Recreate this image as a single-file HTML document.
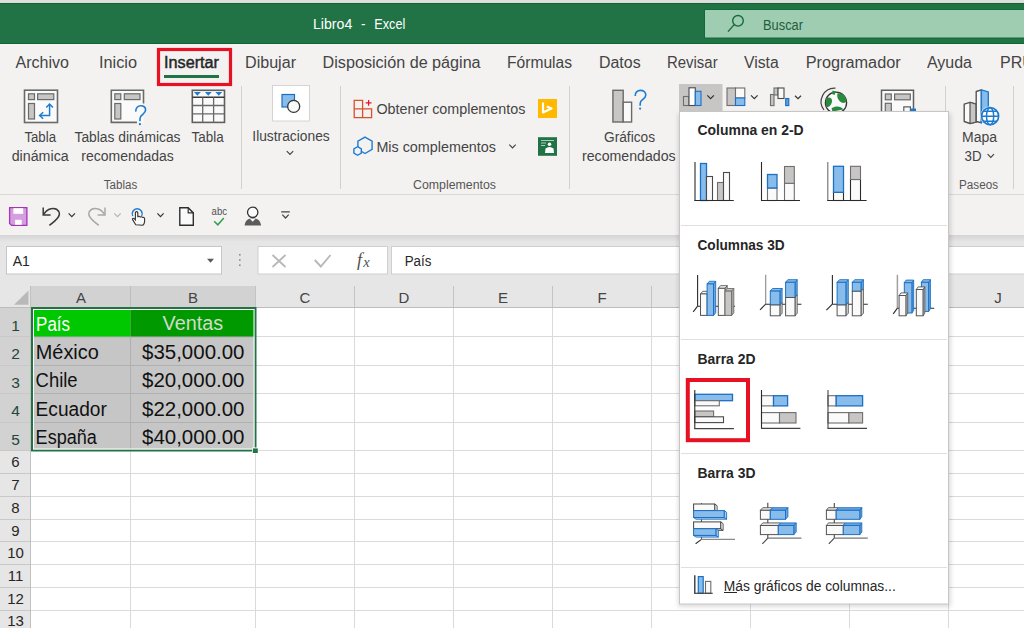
<!DOCTYPE html>
<html><head><meta charset="utf-8"><style>
html,body{margin:0;padding:0;width:1024px;height:628px;overflow:hidden;background:#fff}
svg{display:block}
text{font-family:"Liberation Sans",sans-serif;white-space:pre}
</style></head><body>
<svg width="1024" height="628" viewBox="0 0 1024 628">
<rect x="0" y="0" width="1024" height="628" fill="#ffffff" />
<rect x="0" y="0" width="1024" height="3" fill="#dedcdc" />
<rect x="0" y="3" width="1024" height="41" fill="#217346" />
<rect x="0" y="3" width="1024" height="1" fill="#0b6632" />
<rect x="0" y="43" width="1024" height="1" fill="#0b6632" />
<rect x="704.5" y="9.5" width="330" height="28.5" fill="#9fcdb2" stroke="#106b37" stroke-width="1"/>
<circle cx="738" cy="20.8" r="5.3" fill="none" stroke="#176a39" stroke-width="1.4"/>
<line x1="734.2" y1="24.6" x2="728" y2="31.6" stroke="#176a39" stroke-width="1.4"/>
<text x="763" y="29.6" font-size="14" fill="#1f5e3b" textLength="40" lengthAdjust="spacingAndGlyphs" >Buscar</text>
<text x="313" y="28.8" font-size="15" fill="#ffffff" textLength="39.3" lengthAdjust="spacingAndGlyphs" >Libro4</text>
<text x="361" y="28.8" font-size="15" fill="#ffffff" textLength="4.5" lengthAdjust="spacingAndGlyphs" >-</text>
<text x="374.3" y="28.8" font-size="15" fill="#ffffff" textLength="31" lengthAdjust="spacingAndGlyphs" >Excel</text>
<rect x="0" y="44" width="1024" height="150" fill="#f3f2f1" />
<rect x="0" y="194" width="1024" height="1" fill="#dad8d6" />
<text x="15.6" y="68" font-size="16" fill="#444444" textLength="53.4" lengthAdjust="spacingAndGlyphs" >Archivo</text>
<text x="99" y="68" font-size="16" fill="#444444" textLength="38" lengthAdjust="spacingAndGlyphs" >Inicio</text>
<text x="245" y="68" font-size="16" fill="#444444" textLength="51" lengthAdjust="spacingAndGlyphs" >Dibujar</text>
<text x="322.6" y="68" font-size="16" fill="#444444" textLength="158" lengthAdjust="spacingAndGlyphs" >Disposición de página</text>
<text x="507" y="68" font-size="16" fill="#444444" textLength="65" lengthAdjust="spacingAndGlyphs" >Fórmulas</text>
<text x="599" y="68" font-size="16" fill="#444444" textLength="41.6" lengthAdjust="spacingAndGlyphs" >Datos</text>
<text x="667" y="68" font-size="16" fill="#444444" textLength="50.6" lengthAdjust="spacingAndGlyphs" >Revisar</text>
<text x="744" y="68" font-size="16" fill="#444444" textLength="34.7" lengthAdjust="spacingAndGlyphs" >Vista</text>
<text x="805.7" y="68" font-size="16" fill="#444444" textLength="95" lengthAdjust="spacingAndGlyphs" >Programador</text>
<text x="927" y="68" font-size="16" fill="#444444" textLength="45" lengthAdjust="spacingAndGlyphs" >Ayuda</text>
<text x="1000" y="68" font-size="16" fill="#444444" >PRU</text>
<text x="164" y="68" font-size="16" fill="#262626" textLength="55" lengthAdjust="spacingAndGlyphs" stroke="#262626" stroke-width="0.45">Insertar</text>
<rect x="164" y="75" width="55" height="3" fill="#217346" />
<rect x="158.5" y="49.5" width="72" height="35" fill="none" stroke="#e81123" stroke-width="3.2"/>
<rect x="241" y="86" width="1" height="103" fill="#d2d0ce" />
<rect x="340" y="86" width="1" height="103" fill="#d2d0ce" />
<rect x="569" y="86" width="1" height="103" fill="#d2d0ce" />
<rect x="945" y="86" width="1" height="103" fill="#d2d0ce" />
<rect x="1013" y="86" width="1" height="103" fill="#d2d0ce" />
<text x="24.4" y="142.3" font-size="14" fill="#444444" textLength="31.6" lengthAdjust="spacingAndGlyphs" >Tabla</text>
<text x="11.7" y="161.3" font-size="14" fill="#444444" textLength="57" lengthAdjust="spacingAndGlyphs" >dinámica</text>
<text x="74.5" y="142.3" font-size="14" fill="#444444" textLength="106" lengthAdjust="spacingAndGlyphs" >Tablas dinámicas</text>
<text x="81.3" y="161.3" font-size="14" fill="#444444" textLength="92.5" lengthAdjust="spacingAndGlyphs" >recomendadas</text>
<text x="191.6" y="142.3" font-size="14" fill="#444444" textLength="32" lengthAdjust="spacingAndGlyphs" >Tabla</text>
<text x="103.8" y="189.2" font-size="12" fill="#555555" textLength="33.4" lengthAdjust="spacingAndGlyphs" >Tablas</text>
<text x="252.3" y="140.5" font-size="14" fill="#444444" textLength="77.4" lengthAdjust="spacingAndGlyphs" >Ilustraciones</text>
<text x="376.4" y="114" font-size="14" fill="#444444" textLength="149" lengthAdjust="spacingAndGlyphs" >Obtener complementos</text>
<text x="376.4" y="152" font-size="14" fill="#444444" textLength="119.6" lengthAdjust="spacingAndGlyphs" >Mis complementos</text>
<text x="413" y="189" font-size="12" fill="#555555" textLength="83" lengthAdjust="spacingAndGlyphs" >Complementos</text>
<text x="604" y="141.8" font-size="14" fill="#444444" textLength="51" lengthAdjust="spacingAndGlyphs" >Gráficos</text>
<text x="582" y="160.9" font-size="14" fill="#444444" textLength="93.6" lengthAdjust="spacingAndGlyphs" >recomendados</text>
<text x="962" y="142.4" font-size="14" fill="#444444" textLength="35" lengthAdjust="spacingAndGlyphs" >Mapa</text>
<text x="964.6" y="161" font-size="14" fill="#444444" textLength="17" lengthAdjust="spacingAndGlyphs" >3D</text>
<text x="959" y="189" font-size="12" fill="#555555" textLength="39" lengthAdjust="spacingAndGlyphs" >Paseos</text>
<rect x="0" y="195" width="1024" height="40" fill="#f3f2f1" />
<rect x="0" y="235" width="1024" height="73" fill="#e6e6e6" />
<defs><linearGradient id="qsh" x1="0" y1="0" x2="0" y2="1"><stop offset="0" stop-color="#d4d4d4"/><stop offset="1" stop-color="#e6e6e6"/></linearGradient></defs>
<rect x="0" y="235" width="1024" height="7" fill="url(#qsh)" />
<rect x="6.5" y="246.5" width="215" height="27.5" fill="#ffffff" stroke="#c6c6c6" stroke-width="1"/>
<text x="12.7" y="265.9" font-size="14" fill="#262626" textLength="17.1" lengthAdjust="spacingAndGlyphs" >A1</text>
<polygon points="207,258.8 214,258.8 210.5,262.8" fill="#5a5a5a"/>
<rect x="239" y="254.0" width="1.6" height="1.6" fill="#8e8e8e" />
<rect x="239" y="259.2" width="1.6" height="1.6" fill="#8e8e8e" />
<rect x="239" y="264.4" width="1.6" height="1.6" fill="#8e8e8e" />
<rect x="258" y="246.5" width="129.5" height="27.5" fill="#ffffff" stroke="#cfcfcf" stroke-width="1"/>
<path d="M272.5 255 L285.5 267 M285.5 255 L272.5 267" stroke="#b8b8b8" stroke-width="1.8" fill="none"/>
<path d="M314.8 260 L320.8 266.5 L330.5 255" stroke="#b8b8b8" stroke-width="1.9" fill="none"/>
<text x="357" y="265.5" font-size="18" font-style="italic" fill="#505050" style="font-family:'Liberation Serif',serif">f</text>
<text x="363.3" y="266.5" font-size="14.5" font-style="italic" fill="#505050" style="font-family:'Liberation Serif',serif">x</text>
<rect x="391.5" y="246.5" width="640" height="27.5" fill="#ffffff" stroke="#cfcfcf" stroke-width="1"/>
<text x="404.7" y="265.6" font-size="14" fill="#262626" textLength="26.7" lengthAdjust="spacingAndGlyphs" >País</text>
<rect x="130" y="286" width="1" height="22" fill="#c4c4c4" />
<rect x="255" y="286" width="1" height="22" fill="#c4c4c4" />
<rect x="354" y="286" width="1" height="22" fill="#c4c4c4" />
<rect x="453" y="286" width="1" height="22" fill="#c4c4c4" />
<rect x="552" y="286" width="1" height="22" fill="#c4c4c4" />
<rect x="651" y="286" width="1" height="22" fill="#c4c4c4" />
<rect x="750" y="286" width="1" height="22" fill="#c4c4c4" />
<rect x="849" y="286" width="1" height="22" fill="#c4c4c4" />
<rect x="948" y="286" width="1" height="22" fill="#c4c4c4" />
<rect x="1047" y="286" width="1" height="22" fill="#c4c4c4" />
<rect x="31" y="286" width="224" height="21" fill="#d2d2d2" />
<rect x="130" y="286" width="1" height="21" fill="#bdbdbd" />
<rect x="0" y="307" width="1024" height="1" fill="#bcbcbc" />
<rect x="0" y="308" width="31" height="320" fill="#e6e6e6" />
<rect x="0" y="308" width="31" height="143" fill="#d2d2d2" />
<rect x="0" y="336" width="31" height="1" fill="#c8c8c8" />
<rect x="0" y="365" width="31" height="1" fill="#c8c8c8" />
<rect x="0" y="393" width="31" height="1" fill="#c8c8c8" />
<rect x="0" y="422" width="31" height="1" fill="#c8c8c8" />
<rect x="0" y="450" width="31" height="1" fill="#c8c8c8" />
<rect x="0" y="473" width="31" height="1" fill="#c8c8c8" />
<rect x="0" y="496" width="31" height="1" fill="#c8c8c8" />
<rect x="0" y="519" width="31" height="1" fill="#c8c8c8" />
<rect x="0" y="541" width="31" height="1" fill="#c8c8c8" />
<rect x="0" y="564" width="31" height="1" fill="#c8c8c8" />
<rect x="0" y="587" width="31" height="1" fill="#c8c8c8" />
<rect x="0" y="610" width="31" height="1" fill="#c8c8c8" />
<rect x="0" y="633" width="31" height="1" fill="#c8c8c8" />
<rect x="30" y="286" width="1" height="342" fill="#c0c0c0" />
<polygon points="14,304.7 28.5,290.6 28.5,304.7" fill="#b9b9b9"/>
<text x="81.0" y="302.6" font-size="15" fill="#444444" text-anchor="middle" >A</text>
<text x="193.0" y="302.6" font-size="15" fill="#444444" text-anchor="middle" >B</text>
<text x="305.0" y="302.6" font-size="15" fill="#444444" text-anchor="middle" >C</text>
<text x="404.0" y="302.6" font-size="15" fill="#444444" text-anchor="middle" >D</text>
<text x="503.0" y="302.6" font-size="15" fill="#444444" text-anchor="middle" >E</text>
<text x="602.0" y="302.6" font-size="15" fill="#444444" text-anchor="middle" >F</text>
<text x="701.0" y="302.6" font-size="15" fill="#444444" text-anchor="middle" >G</text>
<text x="800.0" y="302.6" font-size="15" fill="#444444" text-anchor="middle" >H</text>
<text x="899.0" y="302.6" font-size="15" fill="#444444" text-anchor="middle" >I</text>
<text x="998.0" y="302.6" font-size="15" fill="#444444" text-anchor="middle" >J</text>
<rect x="130" y="308" width="1" height="320" fill="#dadada" />
<rect x="255" y="308" width="1" height="320" fill="#dadada" />
<rect x="354" y="308" width="1" height="320" fill="#dadada" />
<rect x="453" y="308" width="1" height="320" fill="#dadada" />
<rect x="552" y="308" width="1" height="320" fill="#dadada" />
<rect x="651" y="308" width="1" height="320" fill="#dadada" />
<rect x="750" y="308" width="1" height="320" fill="#dadada" />
<rect x="849" y="308" width="1" height="320" fill="#dadada" />
<rect x="948" y="308" width="1" height="320" fill="#dadada" />
<rect x="1047" y="308" width="1" height="320" fill="#dadada" />
<rect x="31" y="336" width="1024" height="1" fill="#dadada" />
<rect x="31" y="365" width="1024" height="1" fill="#dadada" />
<rect x="31" y="393" width="1024" height="1" fill="#dadada" />
<rect x="31" y="422" width="1024" height="1" fill="#dadada" />
<rect x="31" y="450" width="1024" height="1" fill="#dadada" />
<rect x="31" y="473" width="1024" height="1" fill="#dadada" />
<rect x="31" y="496" width="1024" height="1" fill="#dadada" />
<rect x="31" y="519" width="1024" height="1" fill="#dadada" />
<rect x="31" y="541" width="1024" height="1" fill="#dadada" />
<rect x="31" y="564" width="1024" height="1" fill="#dadada" />
<rect x="31" y="587" width="1024" height="1" fill="#dadada" />
<rect x="31" y="610" width="1024" height="1" fill="#dadada" />
<rect x="31" y="633" width="1024" height="1" fill="#dadada" />
<text x="15.5" y="330.5" font-size="15.5" fill="#24463a" text-anchor="middle" >1</text>
<text x="15.5" y="359" font-size="15.5" fill="#24463a" text-anchor="middle" >2</text>
<text x="15.5" y="387.8" font-size="15.5" fill="#24463a" text-anchor="middle" >3</text>
<text x="15.5" y="416.3" font-size="15.5" fill="#24463a" text-anchor="middle" >4</text>
<text x="15.5" y="444.7" font-size="15.5" fill="#24463a" text-anchor="middle" >5</text>
<text x="15.5" y="467.4" font-size="15" fill="#262626" text-anchor="middle" >6</text>
<text x="15.5" y="490.1" font-size="15" fill="#262626" text-anchor="middle" >7</text>
<text x="15.5" y="512.8" font-size="15" fill="#262626" text-anchor="middle" >8</text>
<text x="15.5" y="535.5" font-size="15" fill="#262626" text-anchor="middle" >9</text>
<text x="15.5" y="558.2" font-size="15" fill="#262626" text-anchor="middle" >10</text>
<text x="15.5" y="580.9" font-size="15" fill="#262626" text-anchor="middle" >11</text>
<text x="15.5" y="603.6" font-size="15" fill="#262626" text-anchor="middle" >12</text>
<text x="15.5" y="626.3" font-size="15" fill="#262626" text-anchor="middle" >13</text>
<rect x="31" y="308" width="224" height="143" fill="#c6c6c6" />
<rect x="33" y="310" width="97.5" height="27" fill="#00c800" />
<rect x="130.5" y="310" width="124" height="27" fill="#009900" />
<rect x="33" y="365" width="222" height="1" fill="#b0b0b0" />
<rect x="33" y="393" width="222" height="1" fill="#b0b0b0" />
<rect x="33" y="422" width="222" height="1" fill="#b0b0b0" />
<rect x="33" y="336.5" width="222" height="1" fill="#b0b0b0" />
<rect x="130" y="337" width="1" height="113" fill="#b0b0b0" />
<rect x="32" y="308" width="223.5" height="142.5" fill="none" stroke="#217346" stroke-width="2"/>
<rect x="33.5" y="309.5" width="220.5" height="139.5" fill="none" stroke="#ffffff" stroke-width="1"/>
<rect x="252" y="447.5" width="6.5" height="6" fill="#ffffff" />
<rect x="252.8" y="448.4" width="5" height="4.6" fill="#217346" />
<text x="36.1" y="330.6" font-size="20" fill="#ffffff" textLength="34" lengthAdjust="spacingAndGlyphs" >País</text>
<text x="162.6" y="330.4" font-size="20" fill="#cfdccc" textLength="60.6" lengthAdjust="spacingAndGlyphs" >Ventas</text>
<text x="35.8" y="358.8" font-size="20" fill="#111111" textLength="63" lengthAdjust="spacingAndGlyphs" >México</text>
<text x="35.6" y="387" font-size="20" fill="#111111" textLength="42" lengthAdjust="spacingAndGlyphs" >Chile</text>
<text x="35.6" y="415.5" font-size="20" fill="#111111" textLength="71.2" lengthAdjust="spacingAndGlyphs" >Ecuador</text>
<text x="35.6" y="444" font-size="20" fill="#111111" textLength="61.3" lengthAdjust="spacingAndGlyphs" >España</text>
<text x="142" y="358.8" font-size="20" fill="#111111" textLength="102.5" lengthAdjust="spacingAndGlyphs" >$35,000.00</text>
<text x="142" y="387" font-size="20" fill="#111111" textLength="102.5" lengthAdjust="spacingAndGlyphs" >$20,000.00</text>
<text x="142" y="415.5" font-size="20" fill="#111111" textLength="102.5" lengthAdjust="spacingAndGlyphs" >$22,000.00</text>
<text x="142" y="444" font-size="20" fill="#111111" textLength="102.5" lengthAdjust="spacingAndGlyphs" >$40,000.00</text>
<g transform="translate(18,84)">
<rect x="6.50" y="6.20" width="33.00" height="32.30" fill="#fafafa" stroke="#6a6a6a" stroke-width="1.6"/>
<rect x="10.50" y="9.80" width="6.00" height="5.80" fill="#c8c6c4" stroke="#6a6a6a" stroke-width="1.2"/>
<rect x="19.60" y="9.80" width="16.20" height="5.80" fill="#c8c6c4" stroke="#6a6a6a" stroke-width="1.2"/>
<rect x="10.50" y="19.50" width="6.00" height="15.50" fill="#c8c6c4" stroke="#6a6a6a" stroke-width="1.2"/>
<path d="M31.6 20.5 V31.5 H22" fill="none" stroke="#1e7bd0" stroke-width="1.5"/>
<path d="M28.3 23.6 L31.6 20 L34.9 23.6 M25.2 28.2 L21.6 31.5 L25.2 34.8" fill="none" stroke="#1e7bd0" stroke-width="1.5"/>
</g>
<g transform="translate(104,84)">
<path d="M7.3 6.2 H39.5 V38.4 H7.3 Z" fill="#fafafa" stroke="none"/>
<path d="M39.5 19.4 V6.2 H7.3 V38.4 H33" fill="none" stroke="#6a6a6a" stroke-width="1.6"/>
<rect x="10.80" y="9.80" width="6.00" height="5.80" fill="#c8c6c4" stroke="#6a6a6a" stroke-width="1.2"/>
<rect x="20.30" y="9.80" width="15.70" height="5.80" fill="#c8c6c4" stroke="#6a6a6a" stroke-width="1.2"/>
<rect x="10.80" y="19.50" width="6.00" height="15.50" fill="#c8c6c4" stroke="#6a6a6a" stroke-width="1.2"/>
<path d="M31.8 27.6 C31.6 23.8 34 21.8 36.7 21.8 C39.6 21.8 41.6 23.6 41.6 26.1 C41.6 29.1 38.4 30.3 36.8 32.2 C36 33.2 35.9 34.5 35.9 37.3" fill="none" stroke="#1e7bd0" stroke-width="1.6"/>
<circle cx="35.9" cy="40.2" r="1.1" fill="#1e7bd0"/>
</g>
<g transform="translate(185,84)">
<rect x="7.30" y="6.30" width="32.20" height="32.10" fill="#fafafa" stroke="#5f5f5f" stroke-width="1.6"/>
<path d="M7.3 13.3 H39.5" stroke="#3a3a3a" stroke-width="1.4"/>
<path d="M17.7 13.3 V38.4 M28.6 13.3 V38.4 M7.3 21.5 H39.5 M7.3 29.9 H39.5" stroke="#6a6a6a" stroke-width="1.3"/>
<polygon points="9.0,8.1 15.8,8.1 12.4,11.8" fill="#1e7bd0"/>
<polygon points="19.900000000000002,8.1 26.7,8.1 23.3,11.8" fill="#1e7bd0"/>
<polygon points="30.4,8.1 37.199999999999996,8.1 33.8,11.8" fill="#1e7bd0"/>
</g>
<rect x="272.5" y="85.5" width="37" height="35.5" fill="#ffffff" stroke="#d4d4d4" stroke-width="1"/>
<rect x="282.00" y="94.50" width="12.50" height="12.50" fill="#88bceb" stroke="#1c6fc2" stroke-width="1.2"/>
<circle cx="293.7" cy="106.4" r="6" fill="#fafafa" stroke="#333" stroke-width="1.3"/>
<path d="M286.8 151.2 L290 154.4 L293.2 151.2" fill="none" stroke="#444" stroke-width="1.2"/>
<g transform="translate(345,92)">
<path d="M9.2 8.4 H17.6 V25.6 H9.2 Z M9.2 16.9 H26.6 V25.6 H17.6" fill="none" stroke="#d9512c" stroke-width="1.3"/>
<path d="M23.6 8 V13.8 M20.7 10.9 H26.5" stroke="#e81123" stroke-width="1.2"/>
</g>
<polygon points="365.00,137.10 372.10,141.20 372.10,149.40 365.00,153.50 357.90,149.40 357.90,141.20" fill="none" stroke="#1e7bd0" stroke-width="1.4"/>
<polygon points="357.60,146.70 361.32,148.85 361.32,153.15 357.60,155.30 353.88,153.15 353.88,148.85" fill="#f3f2f1" stroke="#1e7bd0" stroke-width="1.4"/>
<path d="M509.3 144.6 L512.5 147.8 L515.7 144.6" fill="none" stroke="#444" stroke-width="1.2"/>
<rect x="538" y="99" width="19" height="19" fill="#ffb900" />
<path d="M543 102.5 V112.5 L551.5 108.5 L546.8 106.6" fill="none" stroke="#ffffff" stroke-width="2.2" stroke-linejoin="round"/>
<rect x="538" y="137.2" width="19" height="18.6" fill="#217346" />
<path d="M541 140.5 H554 M541 143 H546 M541 145.5 H545" stroke="#cfe6d8" stroke-width="0.8"/>
<circle cx="549.5" cy="144.3" r="1.8" fill="#ffffff"/>
<path d="M545 153 L545.5 148.5 Q549.5 145.5 553.5 148.5 L554 153 Z" fill="#ffffff"/>
<rect x="612.90" y="90.30" width="10.30" height="31.70" fill="#c8c6c4" stroke="#6a6a6a" stroke-width="1.4"/>
<rect x="623.20" y="102.20" width="8.40" height="19.80" fill="#fafafa" stroke="#6a6a6a" stroke-width="1.4"/>
<path d="M635.2 96 C635 92.5 637.4 90.4 640.4 90.4 C643.5 90.4 645.8 92.3 645.8 95 C645.8 98 642.5 99.4 640.9 101.2 C640.2 102.1 640.1 103.3 640.1 105.8" fill="none" stroke="#1e7bd0" stroke-width="1.6"/>
<circle cx="640.1" cy="108.6" r="1.1" fill="#1e7bd0"/>
<path d="M824 110 A13.5 13.5 0 0 1 835.5 88.2" fill="none" stroke="#444" stroke-width="1.2"/>
<circle cx="836" cy="102.8" r="10.6" fill="#fafafa" stroke="#333" stroke-width="1.3"/>
<path d="M837.5 93.5 C841.5 92.5 846 95.5 846.6 101 C845.5 103.5 842 103.5 840 101.5 C838.5 100 836.5 97 837.5 93.5 Z M826 98.5 C829 96.5 832.5 98 832 101.5 C831.5 104.5 829.5 107.5 826.8 107 C825.5 104.5 825.5 101 826 98.5 Z M831.5 108.5 C835.5 105.5 841 106 843.5 109.5 L832.5 111.5 Z M832.5 90.5 L836 91.5 L834.5 95 L832 94 Z" fill="#2c8a3e"/>
<path d="M881.5 111 V90.3 H913.5 V111" fill="#fafafa" stroke="#5f5f5f" stroke-width="1.5"/>
<rect x="885.30" y="94.00" width="6.00" height="5.80" fill="#c8c6c4" stroke="#6a6a6a" stroke-width="1.2"/>
<rect x="894.60" y="94.00" width="15.70" height="5.80" fill="#c8c6c4" stroke="#6a6a6a" stroke-width="1.2"/>
<rect x="885.30" y="103.30" width="6.00" height="8.70" fill="#c8c6c4" stroke="#6a6a6a" stroke-width="1.2"/>
<path d="M903.8 111 V106.8 H910.4 V111" fill="#fafafa" stroke="#5f5f5f" stroke-width="1.2"/>
<rect x="910.5" y="108.5" width="5.5" height="2.5" fill="#1e7bd0" />
<g transform="translate(955,84)">
<polygon points="9.20,20.20 15.00,18.30 21.20,20.20 21.20,38.00 15.00,39.50 9.20,37.50" fill="#fafafa" stroke="#555" stroke-width="1.4" stroke-linejoin="round"/>
<polygon points="15.00,18.30 21.20,20.20 21.20,38.00 15.00,39.50" fill="#c8c6c4" stroke="#555" stroke-width="1.2" stroke-linejoin="round"/>
<polygon points="21.20,7.50 26.40,5.90 26.40,38.80 21.20,37.50" fill="#fafafa" stroke="#555" stroke-width="1.4" stroke-linejoin="round"/>
<polygon points="26.40,5.90 33.30,7.90 33.30,30.00 26.40,38.80" fill="#88bceb" stroke="#1e7bd0" stroke-width="1.4" stroke-linejoin="round"/>
<circle cx="35.1" cy="32.2" r="9.9" fill="#f3f2f1"/>
<circle cx="35.1" cy="32.2" r="8.5" fill="#ffffff" stroke="#1e7bd0" stroke-width="1.7"/>
<ellipse cx="35.1" cy="32.2" rx="3.6" ry="8.5" fill="none" stroke="#1e7bd0" stroke-width="1.5"/>
<path d="M26.6 32.2 H43.6 M28.2 27.2 H42 M28.2 37.2 H42" stroke="#1e7bd0" stroke-width="1.5"/>
</g>
<path d="M987.6 154.2 L990.8 157.4 L994 154.2" fill="none" stroke="#444" stroke-width="1.2"/>
<path d="M9.6 207.6 H26.9 V225.4 H11.6 L9.6 223.4 Z" fill="#d49ee0" stroke="#a436b8" stroke-width="1.3"/>
<rect x="13.4" y="208.2" width="9.8" height="5.6" fill="#ffffff" />
<rect x="15.1" y="219.8" width="6.6" height="5" fill="#ffffff" />
<path d="M43.2 207.6 V215 H50.6" fill="none" stroke="#3a3a3a" stroke-width="1.5"/>
<path d="M43.8 214.5 C46.5 208.5 55.5 206 58.8 211.5 C61 215.5 57 219.5 49.4 225.4" fill="none" stroke="#3a3a3a" stroke-width="1.5"/>
<path d="M68.6 213.4 L71.8 216.6 L75 213.4" fill="none" stroke="#333" stroke-width="1.2"/>
<path d="M105 207.6 V215 H97.6" fill="none" stroke="#a8a8a8" stroke-width="1.5"/>
<path d="M104.4 214.5 C101.7 208.5 92.7 206 89.4 211.5 C87.2 215.5 91.2 219.5 98.8 225.4" fill="none" stroke="#a8a8a8" stroke-width="1.5"/>
<path d="M114.3 213.4 L117.5 216.6 L120.7 213.4" fill="none" stroke="#b4b4b4" stroke-width="1.2"/>
<path d="M132.7 216 A5 5 0 1 1 141.7 216" fill="none" stroke="#1e7bd0" stroke-width="1.5"/>
<path d="M135.8 224.8 L132.6 219.6 C132 218.6 133.4 217.8 134.2 218.6 L135.4 219.8 V212.8 C135.4 211.2 137.8 211.2 137.8 212.8 V217.2 C138 216 140.2 216 140.2 217.4 C140.4 216.4 142.5 216.6 142.5 217.8 C142.8 217 144.6 217.3 144.6 218.6 V221.5 C144.6 223.3 143.6 224.6 142.8 225.2 Z" fill="#fafafa" stroke="#333" stroke-width="1.1"/>
<path d="M157.4 213.4 L160.5 216.6 L163.6 213.4" fill="none" stroke="#333" stroke-width="1.2"/>
<path d="M179.8 207.8 H188.2 L193.3 212.9 V225.3 H179.8 Z" fill="#fafafa" stroke="#2e2e2e" stroke-width="1.4"/>
<path d="M188.2 207.8 V212.9 H193.3" fill="none" stroke="#2e2e2e" stroke-width="1.2"/>
<text x="211.6" y="215.4" font-size="10.5" fill="#505050" textLength="15.4" lengthAdjust="spacingAndGlyphs">abc</text>
<path d="M214.2 221.3 L217.8 224.8 L223.8 217.9" fill="none" stroke="#34a04a" stroke-width="1.5"/>
<path d="M244.6 225.6 C245.2 220.5 248 218.2 252.7 218.2 C257.4 218.2 260.4 220.5 261.1 225.6 Z" fill="#5c5c5c"/>
<path d="M249.6 218.6 L252.7 221.8 L255.8 218.6 Z" fill="#fafafa"/>
<circle cx="252.7" cy="212.3" r="5.2" fill="#fafafa" stroke="#333" stroke-width="1.3"/>
<path d="M281.2 211.8 H289.8 M282.3 214.6 L285.5 218 L288.7 214.6" fill="none" stroke="#444" stroke-width="1.2"/>
<defs><filter id="sh" x="-5%" y="-5%" width="110%" height="110%"><feGaussianBlur stdDeviation="2"/></filter></defs>
<rect x="678" y="113" width="273" height="494" fill="#000" opacity="0.13" filter="url(#sh)"/>
<rect x="679.5" y="111.5" width="269" height="492.5" fill="#ffffff" stroke="#c6c6c6" stroke-width="1"/>
<text x="697.5" y="135.3" font-size="14" fill="#262626" font-weight="bold" textLength="106.2" lengthAdjust="spacingAndGlyphs" >Columna en 2-D</text>
<text x="697.5" y="250" font-size="14" fill="#262626" font-weight="bold" textLength="87.2" lengthAdjust="spacingAndGlyphs" >Columnas 3D</text>
<text x="697.5" y="363.9" font-size="14" fill="#262626" font-weight="bold" textLength="58" lengthAdjust="spacingAndGlyphs" >Barra 2D</text>
<text x="697.5" y="477.5" font-size="14" fill="#262626" font-weight="bold" textLength="58" lengthAdjust="spacingAndGlyphs" >Barra 3D</text>
<rect x="681" y="225" width="266" height="1" fill="#e1dfdd" />
<rect x="681" y="339" width="266" height="1" fill="#e1dfdd" />
<rect x="681" y="453" width="266" height="1" fill="#e1dfdd" />
<rect x="681" y="567" width="266" height="1" fill="#e1dfdd" />
<g transform="translate(690,155)">
<rect x="10.50" y="8.50" width="6.00" height="37.00" fill="#88bceb" stroke="#1c6fc2" stroke-width="1.3"/>
<rect x="16.50" y="21.50" width="6.00" height="24.00" fill="#fafafa" stroke="#4a4a4a" stroke-width="1.1"/>
<rect x="27.50" y="27.50" width="6.00" height="18.00" fill="#c8c6c4" stroke="#6e6e6e" stroke-width="1.1"/>
<rect x="33.50" y="17.50" width="6.00" height="28.00" fill="#fafafa" stroke="#4a4a4a" stroke-width="1.1"/>
<line x1="5" y1="7" x2="5" y2="46" stroke="#2b2b2b" stroke-width="1.1"/>
<line x1="4.5" y1="45.5" x2="43.8" y2="45.5" stroke="#2b2b2b" stroke-width="1.1"/>
</g>
<g transform="translate(755,155)">
<rect x="12.50" y="33.00" width="9.50" height="12.50" fill="#fafafa" stroke="#6e6e6e" stroke-width="1.1"/>
<rect x="12.50" y="19.50" width="9.50" height="13.50" fill="#88bceb" stroke="#1c6fc2" stroke-width="1.3"/>
<rect x="29.50" y="28.30" width="9.80" height="17.20" fill="#fafafa" stroke="#6e6e6e" stroke-width="1.1"/>
<rect x="29.50" y="11.50" width="9.80" height="16.80" fill="#c8c6c4" stroke="#6e6e6e" stroke-width="1.1"/>
<line x1="6.5" y1="7" x2="6.5" y2="46" stroke="#2b2b2b" stroke-width="1.1"/>
<line x1="6" y1="45.5" x2="45" y2="45.5" stroke="#2b2b2b" stroke-width="1.1"/>
</g>
<g transform="translate(822,155)">
<rect x="11.50" y="37.30" width="10.00" height="8.20" fill="#fafafa" stroke="#2b2b2b" stroke-width="1.1"/>
<rect x="11.50" y="11.30" width="10.00" height="26.00" fill="#88bceb" stroke="#1c6fc2" stroke-width="1.3"/>
<rect x="28.50" y="24.50" width="10.00" height="21.00" fill="#fafafa" stroke="#2b2b2b" stroke-width="1.1"/>
<rect x="28.50" y="11.30" width="10.00" height="13.20" fill="#c8c6c4" stroke="#6e6e6e" stroke-width="1.1"/>
<line x1="5.8" y1="7" x2="5.8" y2="46" stroke="#6e6e6e" stroke-width="1.1"/>
<line x1="5.3" y1="45.5" x2="44.6" y2="45.5" stroke="#2b2b2b" stroke-width="1.1"/>
</g>
<g transform="translate(690,270)">
<line x1="7.6" y1="5" x2="7.6" y2="36.2" stroke="#2b2b2b" stroke-width="1.1"/>
<line x1="7.6" y1="36.2" x2="3.2" y2="41.8" stroke="#2b2b2b" stroke-width="1.1"/>
<line x1="7.6" y1="36.2" x2="45" y2="36.2" stroke="#2b2b2b" stroke-width="1.1"/>
<polygon points="17.10,23.90 19.30,21.30 19.30,42.80 17.10,45.40" fill="#e0e0e0" stroke="#555555" stroke-width="0.9" stroke-linejoin="round"/>
<polygon points="10.50,23.90 12.70,21.30 19.30,21.30 17.10,23.90" fill="#fafafa" stroke="#555555" stroke-width="0.9" stroke-linejoin="round"/>
<rect x="10.50" y="23.90" width="6.60" height="21.50" fill="#fafafa" stroke="#555555" stroke-width="1.0"/>
<polygon points="23.50,13.90 25.70,11.30 25.70,42.80 23.50,45.40" fill="#6aa6e0" stroke="#1c6fc2" stroke-width="0.9" stroke-linejoin="round"/>
<polygon points="17.10,13.90 19.30,11.30 25.70,11.30 23.50,13.90" fill="#88bceb" stroke="#1c6fc2" stroke-width="0.9" stroke-linejoin="round"/>
<rect x="17.10" y="13.90" width="6.40" height="31.50" fill="#88bceb" stroke="#1c6fc2" stroke-width="1.0"/>
<polygon points="35.00,18.30 37.20,15.70 37.20,42.80 35.00,45.40" fill="#e0e0e0" stroke="#555555" stroke-width="0.9" stroke-linejoin="round"/>
<polygon points="28.30,18.30 30.50,15.70 37.20,15.70 35.00,18.30" fill="#fafafa" stroke="#555555" stroke-width="0.9" stroke-linejoin="round"/>
<rect x="28.30" y="18.30" width="6.70" height="27.10" fill="#fafafa" stroke="#555555" stroke-width="1.0"/>
<polygon points="41.60,21.10 43.80,18.50 43.80,42.80 41.60,45.40" fill="#b0aeac" stroke="#6e6e6e" stroke-width="0.9" stroke-linejoin="round"/>
<polygon points="35.00,21.10 37.20,18.50 43.80,18.50 41.60,21.10" fill="#c8c6c4" stroke="#6e6e6e" stroke-width="0.9" stroke-linejoin="round"/>
<rect x="35.00" y="21.10" width="6.60" height="24.30" fill="#c8c6c4" stroke="#6e6e6e" stroke-width="1.0"/>
</g>
<g transform="translate(756,270)">
<line x1="9.7" y1="4.8" x2="9.7" y2="34.2" stroke="#8a8a8a" stroke-width="1.1"/>
<line x1="9.7" y1="34.2" x2="4" y2="39.8" stroke="#2b2b2b" stroke-width="1.1"/>
<line x1="9.7" y1="34.2" x2="45.4" y2="34.2" stroke="#2b2b2b" stroke-width="1.1"/>
<polygon points="23.90,21.10 26.10,18.50 26.10,32.40 23.90,35.00" fill="#6aa6e0" stroke="#1c6fc2" stroke-width="0.9" stroke-linejoin="round"/>
<polygon points="23.90,35.00 26.10,32.40 26.10,43.20 23.90,45.80" fill="#e0e0e0" stroke="#555555" stroke-width="0.9" stroke-linejoin="round"/>
<polygon points="14.30,21.10 16.50,18.50 26.10,18.50 23.90,21.10" fill="#88bceb" stroke="#1c6fc2" stroke-width="0.9" stroke-linejoin="round"/>
<rect x="14.30" y="21.10" width="9.60" height="13.90" fill="#88bceb" stroke="#1c6fc2" stroke-width="1.0"/>
<rect x="14.30" y="35.00" width="9.60" height="10.80" fill="#fafafa" stroke="#555555" stroke-width="1.0"/>
<polygon points="39.00,12.30 41.20,9.70 41.20,24.90 39.00,27.50" fill="#6aa6e0" stroke="#1c6fc2" stroke-width="0.9" stroke-linejoin="round"/>
<polygon points="39.00,27.50 41.20,24.90 41.20,43.20 39.00,45.80" fill="#e0e0e0" stroke="#555555" stroke-width="0.9" stroke-linejoin="round"/>
<polygon points="29.60,12.30 31.80,9.70 41.20,9.70 39.00,12.30" fill="#88bceb" stroke="#1c6fc2" stroke-width="0.9" stroke-linejoin="round"/>
<rect x="29.60" y="12.30" width="9.40" height="15.20" fill="#88bceb" stroke="#1c6fc2" stroke-width="1.0"/>
<rect x="29.60" y="27.50" width="9.40" height="18.30" fill="#fafafa" stroke="#555555" stroke-width="1.0"/>
</g>
<g transform="translate(822,270)">
<line x1="10.4" y1="5" x2="10.4" y2="34.2" stroke="#2b2b2b" stroke-width="1.1"/>
<line x1="10.4" y1="34.2" x2="4.4" y2="40.2" stroke="#2b2b2b" stroke-width="1.1"/>
<line x1="10.4" y1="34.2" x2="45.8" y2="34.2" stroke="#2b2b2b" stroke-width="1.1"/>
<polygon points="23.90,12.30 26.30,9.70 26.30,32.40 23.90,35.00" fill="#6aa6e0" stroke="#1c6fc2" stroke-width="0.9" stroke-linejoin="round"/>
<polygon points="23.90,35.00 26.30,32.40 26.30,43.20 23.90,45.80" fill="#e0e0e0" stroke="#555555" stroke-width="0.9" stroke-linejoin="round"/>
<polygon points="15.10,12.30 17.50,9.70 26.30,9.70 23.90,12.30" fill="#88bceb" stroke="#1c6fc2" stroke-width="0.9" stroke-linejoin="round"/>
<rect x="15.10" y="12.30" width="8.80" height="22.70" fill="#88bceb" stroke="#1c6fc2" stroke-width="1.0"/>
<rect x="15.10" y="35.00" width="8.80" height="10.80" fill="#fafafa" stroke="#555555" stroke-width="1.0"/>
<polygon points="39.00,12.30 41.40,9.70 41.40,18.70 39.00,21.30" fill="#6aa6e0" stroke="#1c6fc2" stroke-width="0.9" stroke-linejoin="round"/>
<polygon points="39.00,21.30 41.40,18.70 41.40,43.20 39.00,45.80" fill="#e0e0e0" stroke="#555555" stroke-width="0.9" stroke-linejoin="round"/>
<polygon points="30.30,12.30 32.70,9.70 41.40,9.70 39.00,12.30" fill="#88bceb" stroke="#1c6fc2" stroke-width="0.9" stroke-linejoin="round"/>
<rect x="30.30" y="12.30" width="8.70" height="9.00" fill="#88bceb" stroke="#1c6fc2" stroke-width="1.0"/>
<rect x="30.30" y="21.30" width="8.70" height="24.50" fill="#fafafa" stroke="#555555" stroke-width="1.0"/>
</g>
<g transform="translate(888,270)">
<line x1="9.4" y1="4.8" x2="9.4" y2="38.2" stroke="#a0a0a0" stroke-width="1.5"/>
<line x1="9.4" y1="38.2" x2="5.2" y2="43.8" stroke="#2b2b2b" stroke-width="1.1"/>
<line x1="9.4" y1="38.2" x2="46.2" y2="38.2" stroke="#2b2b2b" stroke-width="1.1"/>
<polygon points="23.90,12.70 25.70,10.10 25.70,40.40 23.90,43.00" fill="#6aa6e0" stroke="#1c6fc2" stroke-width="0.9" stroke-linejoin="round"/>
<polygon points="16.30,12.70 18.10,10.10 25.70,10.10 23.90,12.70" fill="#88bceb" stroke="#1c6fc2" stroke-width="0.9" stroke-linejoin="round"/>
<rect x="16.30" y="12.70" width="7.60" height="30.30" fill="#88bceb" stroke="#1c6fc2" stroke-width="1.0"/>
<polygon points="40.60,12.30 42.40,9.70 42.40,38.80 40.60,41.40" fill="#6aa6e0" stroke="#1c6fc2" stroke-width="0.9" stroke-linejoin="round"/>
<polygon points="33.40,12.30 35.20,9.70 42.40,9.70 40.60,12.30" fill="#88bceb" stroke="#1c6fc2" stroke-width="0.9" stroke-linejoin="round"/>
<rect x="33.40" y="12.30" width="7.20" height="29.10" fill="#88bceb" stroke="#1c6fc2" stroke-width="1.0"/>
<polygon points="17.90,25.50 19.70,22.90 19.70,43.20 17.90,45.80" fill="#e0e0e0" stroke="#555555" stroke-width="0.9" stroke-linejoin="round"/>
<polygon points="11.10,25.50 12.90,22.90 19.70,22.90 17.90,25.50" fill="#fafafa" stroke="#555555" stroke-width="0.9" stroke-linejoin="round"/>
<rect x="11.10" y="25.50" width="6.80" height="20.30" fill="#fafafa" stroke="#555555" stroke-width="1.0"/>
<polygon points="35.00,19.50 36.80,16.90 36.80,43.20 35.00,45.80" fill="#e0e0e0" stroke="#555555" stroke-width="0.9" stroke-linejoin="round"/>
<polygon points="28.30,19.50 30.10,16.90 36.80,16.90 35.00,19.50" fill="#fafafa" stroke="#555555" stroke-width="0.9" stroke-linejoin="round"/>
<rect x="28.30" y="19.50" width="6.70" height="26.30" fill="#fafafa" stroke="#555555" stroke-width="1.0"/>
</g>
<rect x="687.8" y="380" width="60.2" height="60.2" fill="none" stroke="#e81123" stroke-width="4"/>
<g transform="translate(680,372)">
<rect x="14.80" y="22.30" width="37.70" height="6.40" fill="#88bceb" stroke="#1c6fc2" stroke-width="1.3"/>
<rect x="14.80" y="28.70" width="24.50" height="5.10" fill="#fafafa" stroke="#6e6e6e" stroke-width="1.1"/>
<rect x="14.80" y="39.00" width="18.80" height="5.80" fill="#c8c6c4" stroke="#6e6e6e" stroke-width="1.1"/>
<rect x="14.80" y="44.80" width="28.70" height="5.80" fill="#fafafa" stroke="#4a4a4a" stroke-width="1.1"/>
<line x1="14.8" y1="17.9" x2="14.8" y2="57" stroke="#2b2b2b" stroke-width="1.1"/>
<line x1="14.3" y1="56.6" x2="53.9" y2="56.6" stroke="#444" stroke-width="1.1"/>
</g>
<g transform="translate(755,380)">
<rect x="6.50" y="15.70" width="12.00" height="10.20" fill="#fafafa" stroke="#6e6e6e" stroke-width="1.1"/>
<rect x="18.50" y="15.70" width="14.10" height="10.20" fill="#88bceb" stroke="#1c6fc2" stroke-width="1.3"/>
<rect x="6.50" y="32.60" width="18.00" height="10.40" fill="#fafafa" stroke="#6e6e6e" stroke-width="1.1"/>
<rect x="24.50" y="32.60" width="16.50" height="10.40" fill="#c8c6c4" stroke="#6e6e6e" stroke-width="1.1"/>
<line x1="6.5" y1="10" x2="6.5" y2="48.6" stroke="#2b2b2b" stroke-width="1.1"/>
<line x1="6" y1="48.4" x2="45.4" y2="48.4" stroke="#444" stroke-width="1.1"/>
</g>
<g transform="translate(822,380)">
<rect x="6.00" y="15.70" width="8.20" height="10.20" fill="#fafafa" stroke="#6e6e6e" stroke-width="1.1"/>
<rect x="14.20" y="15.70" width="26.40" height="10.20" fill="#88bceb" stroke="#1c6fc2" stroke-width="1.3"/>
<rect x="6.00" y="32.60" width="20.90" height="10.40" fill="#fafafa" stroke="#6e6e6e" stroke-width="1.1"/>
<rect x="26.90" y="32.60" width="13.70" height="10.40" fill="#c8c6c4" stroke="#6e6e6e" stroke-width="1.1"/>
<line x1="6" y1="10" x2="6" y2="48.6" stroke="#444" stroke-width="1.1"/>
<line x1="5.5" y1="48.4" x2="45" y2="48.4" stroke="#444" stroke-width="1.1"/>
</g>
<g transform="translate(690,498)">
<line x1="11.5" y1="5.2" x2="11.5" y2="41.4" stroke="#555" stroke-width="1.1"/>
<line x1="11.5" y1="41.4" x2="5.6" y2="45.8" stroke="#333" stroke-width="1.1"/>
<line x1="11.5" y1="41.4" x2="45" y2="41.4" stroke="#8a8a8a" stroke-width="1.3"/>
<polygon points="3.60,30.70 6.00,32.40 33.10,32.40 30.70,30.70" fill="#ffffff" stroke="#444444" stroke-width="0.9" stroke-linejoin="round"/>
<polygon points="30.70,23.90 33.10,25.60 33.10,32.40 30.70,30.70" fill="#ffffff" stroke="#444444" stroke-width="0.9" stroke-linejoin="round"/>
<rect x="3.60" y="23.90" width="27.10" height="6.80" fill="#fafafa" stroke="#444444" stroke-width="1.0"/>
<polygon points="3.60,37.40 6.00,39.10 28.30,39.10 25.90,37.40" fill="#a9cff2" stroke="#1c6fc2" stroke-width="0.9" stroke-linejoin="round"/>
<polygon points="25.90,30.70 28.30,32.40 28.30,39.10 25.90,37.40" fill="#a9cff2" stroke="#1c6fc2" stroke-width="0.9" stroke-linejoin="round"/>
<rect x="3.60" y="30.70" width="22.30" height="6.70" fill="#88bceb" stroke="#1c6fc2" stroke-width="1.0"/>
<polygon points="3.60,12.60 6.00,14.30 27.10,14.30 24.70,12.60" fill="#ffffff" stroke="#444444" stroke-width="0.9" stroke-linejoin="round"/>
<polygon points="24.70,6.00 27.10,7.70 27.10,14.30 24.70,12.60" fill="#ffffff" stroke="#444444" stroke-width="0.9" stroke-linejoin="round"/>
<rect x="3.60" y="6.00" width="21.10" height="6.60" fill="#fafafa" stroke="#444444" stroke-width="1.0"/>
<polygon points="3.60,19.50 6.00,21.20 36.60,21.20 34.20,19.50" fill="#a9cff2" stroke="#1c6fc2" stroke-width="0.9" stroke-linejoin="round"/>
<polygon points="34.20,12.60 36.60,14.30 36.60,21.20 34.20,19.50" fill="#a9cff2" stroke="#1c6fc2" stroke-width="0.9" stroke-linejoin="round"/>
<rect x="3.60" y="12.60" width="30.60" height="6.90" fill="#88bceb" stroke="#1c6fc2" stroke-width="1.0"/>
</g>
<g transform="translate(756,498)">
<line x1="11.8" y1="4.8" x2="11.8" y2="40.2" stroke="#444" stroke-width="1.1"/>
<line x1="11.8" y1="40.2" x2="6.4" y2="45.8" stroke="#444" stroke-width="1.1"/>
<line x1="11.8" y1="40.2" x2="45.4" y2="40.2" stroke="#777" stroke-width="1.2"/>
<polygon points="4.40,12.30 6.80,9.70 16.70,9.70 14.30,12.30" fill="#e8e8e8" stroke="#555555" stroke-width="0.9" stroke-linejoin="round"/>
<polygon points="14.30,12.30 16.70,9.70 31.90,9.70 29.50,12.30" fill="#6aa6e0" stroke="#1c6fc2" stroke-width="0.9" stroke-linejoin="round"/>
<polygon points="29.50,12.30 31.90,9.70 31.90,18.70 29.50,21.30" fill="#6aa6e0" stroke="#1c6fc2" stroke-width="0.9" stroke-linejoin="round"/>
<rect x="4.40" y="12.30" width="9.90" height="9.00" fill="#fafafa" stroke="#555555" stroke-width="1.0"/>
<rect x="14.30" y="12.30" width="15.20" height="9.00" fill="#88bceb" stroke="#1c6fc2" stroke-width="1.0"/>
<polygon points="4.40,27.50 6.80,24.90 24.70,24.90 22.30,27.50" fill="#e8e8e8" stroke="#555555" stroke-width="0.9" stroke-linejoin="round"/>
<polygon points="22.30,27.50 24.70,24.90 40.20,24.90 37.80,27.50" fill="#6aa6e0" stroke="#1c6fc2" stroke-width="0.9" stroke-linejoin="round"/>
<polygon points="37.80,27.50 40.20,24.90 40.20,34.00 37.80,36.60" fill="#6aa6e0" stroke="#1c6fc2" stroke-width="0.9" stroke-linejoin="round"/>
<rect x="4.40" y="27.50" width="17.90" height="9.10" fill="#fafafa" stroke="#555555" stroke-width="1.0"/>
<rect x="22.30" y="27.50" width="15.50" height="9.10" fill="#88bceb" stroke="#1c6fc2" stroke-width="1.0"/>
</g>
<g transform="translate(822,498)">
<line x1="12.3" y1="5" x2="12.3" y2="40.2" stroke="#444" stroke-width="1.1"/>
<line x1="12.3" y1="40.2" x2="6.8" y2="45.8" stroke="#444" stroke-width="1.1"/>
<line x1="12.3" y1="40.2" x2="45.8" y2="40.2" stroke="#777" stroke-width="1.2"/>
<polygon points="4.40,12.30 6.40,9.70 16.20,9.70 14.20,12.30" fill="#e8e8e8" stroke="#555555" stroke-width="0.9" stroke-linejoin="round"/>
<polygon points="14.20,12.30 16.20,9.70 39.80,9.70 37.80,12.30" fill="#6aa6e0" stroke="#1c6fc2" stroke-width="0.9" stroke-linejoin="round"/>
<polygon points="37.80,12.30 39.80,9.70 39.80,18.70 37.80,21.30" fill="#6aa6e0" stroke="#1c6fc2" stroke-width="0.9" stroke-linejoin="round"/>
<rect x="4.40" y="12.30" width="9.80" height="9.00" fill="#fafafa" stroke="#555555" stroke-width="1.0"/>
<rect x="14.20" y="12.30" width="23.60" height="9.00" fill="#88bceb" stroke="#1c6fc2" stroke-width="1.0"/>
<polygon points="4.40,27.50 6.40,24.90 23.30,24.90 21.30,27.50" fill="#e8e8e8" stroke="#555555" stroke-width="0.9" stroke-linejoin="round"/>
<polygon points="21.30,27.50 23.30,24.90 39.80,24.90 37.80,27.50" fill="#6aa6e0" stroke="#1c6fc2" stroke-width="0.9" stroke-linejoin="round"/>
<polygon points="37.80,27.50 39.80,24.90 39.80,34.00 37.80,36.60" fill="#6aa6e0" stroke="#1c6fc2" stroke-width="0.9" stroke-linejoin="round"/>
<rect x="4.40" y="27.50" width="16.90" height="9.10" fill="#fafafa" stroke="#555555" stroke-width="1.0"/>
<rect x="21.30" y="27.50" width="16.50" height="9.10" fill="#88bceb" stroke="#1c6fc2" stroke-width="1.0"/>
</g>
<g transform="translate(685,565)">
<rect x="13.30" y="11.60" width="4.90" height="16.70" fill="#88bceb" stroke="#1c6fc2" stroke-width="1.2"/>
<rect x="20.50" y="16.40" width="5.30" height="11.90" fill="#fafafa" stroke="#6e6e6e" stroke-width="1.1"/>
<line x1="9.8" y1="10.2" x2="9.8" y2="28.8" stroke="#2b2b2b" stroke-width="1.3"/>
<line x1="9.3" y1="28.3" x2="27.7" y2="28.3" stroke="#444" stroke-width="1.2"/>
</g>
<text x="723.8" y="590.8" font-size="14" fill="#262626" textLength="172" lengthAdjust="spacingAndGlyphs" >Más gráficos de columnas...</text>
<rect x="724" y="592" width="13" height="1" fill="#262626" />
<rect x="679" y="84" width="43.5" height="27" fill="#c8c6c4" />
<rect x="683.50" y="96.50" width="5.50" height="9.00" fill="#c8c6c4" stroke="#6e6e6e" stroke-width="1.1"/>
<rect x="689.00" y="87.80" width="6.30" height="17.70" fill="#ffffff" stroke="#4a4a4a" stroke-width="1.1"/>
<rect x="695.30" y="91.30" width="5.70" height="14.20" fill="#88bceb" stroke="#1c6fc2" stroke-width="1.1"/>
<path d="M707.3 95.3 L710.6 98.6 L713.9 95.3" fill="none" stroke="#333" stroke-width="1.2"/>
<rect x="727.00" y="88.00" width="8.50" height="17.50" fill="#c8c6c4" stroke="#6e6e6e" stroke-width="1.1"/>
<rect x="735.50" y="88.00" width="9.30" height="10.00" fill="#fafafa" stroke="#6e6e6e" stroke-width="1.1"/>
<rect x="735.50" y="98.00" width="9.30" height="7.50" fill="#88bceb" stroke="#1c6fc2" stroke-width="1.1"/>
<path d="M751 95.3 L754.3 98.6 L757.6 95.3" fill="none" stroke="#333" stroke-width="1.2"/>
<rect x="770.50" y="94.50" width="3.50" height="11.10" fill="#c8c6c4" stroke="#6e6e6e" stroke-width="1.1"/>
<rect x="774.00" y="88.00" width="4.00" height="7.00" fill="#c8c6c4" stroke="#6e6e6e" stroke-width="1.1"/>
<rect x="778.00" y="88.00" width="6.00" height="10.50" fill="#fafafa" stroke="#4a4a4a" stroke-width="1.1"/>
<rect x="785.70" y="98.50" width="3.10" height="7.10" fill="#5a9ee0" stroke="#1c6fc2" stroke-width="1.1"/>
<path d="M795 95.8 L798 98.6 L801 95.8" fill="none" stroke="#333" stroke-width="1.2"/></svg></body></html>
